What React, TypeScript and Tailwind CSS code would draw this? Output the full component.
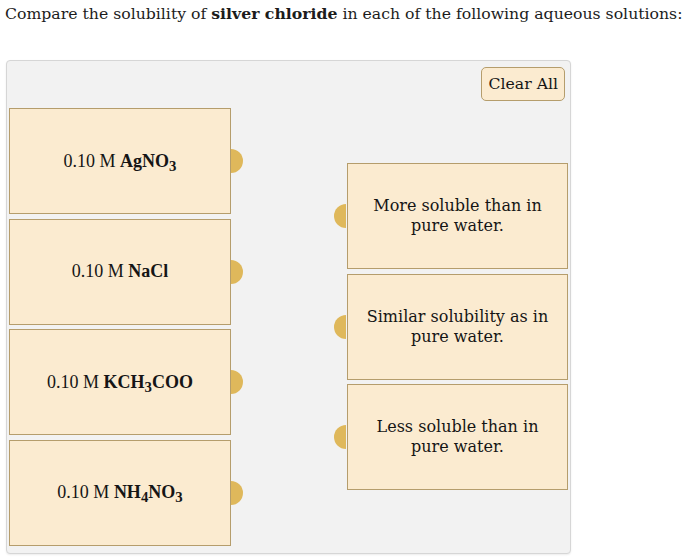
import React from "react";

const serif = { fontFamily: '"DejaVu Serif", "Liberation Serif", serif' };

function Knob({ side }: { side: "left" | "right" }) {
  return side === "right" ? (
    <span className="absolute right-[-13px] top-1/2 -translate-y-1/2 w-[12px] h-[24px] rounded-r-full bg-[#dfb85b]" />
  ) : (
    <span className="absolute left-[-14px] top-1/2 -translate-y-1/2 w-[12px] h-[24px] rounded-l-full bg-[#dfb85b]" />
  );
}

function Sub({ children }: { children: React.ReactNode }) {
  return <sub className="text-[0.82em] bottom-[-0.3em]">{children}</sub>;
}

function LeftItem({ children }: { children: React.ReactNode }) {
  return (
    <div className="relative h-[106px] flex items-center justify-center border border-[#b59d6c] bg-[#fbebd0] text-[18px] text-[#151515] font-['Liberation_Serif',serif]">
      <span>{children}</span>
      <Knob side="right" />
    </div>
  );
}

function RightItem({ text }: { text: string }) {
  return (
    <div
      className="relative h-[106px] flex items-center justify-center border border-[#b59d6c] bg-[#fbebd0] px-3 text-center text-[16px] leading-[20px] text-[#151515]"
      style={serif}
    >
      <span className="max-w-[190px]">{text}</span>
      <Knob side="left" />
    </div>
  );
}

export default function App() {
  return (
    <div className="w-[688px] h-[558px] bg-white">
      <p className="pl-[5px] pt-[2px] text-[15.7px] leading-[24px] text-[#1c1c1c]" style={serif}>
        Compare the solubility of <b>silver chloride</b> in each of the following aqueous solutions:
      </p>
      <div className="ml-[6px] mt-[34px] w-[565px] h-[494px] rounded-[4px] border border-[#d6d6d6] bg-[#f2f2f2] px-[2px] pt-[6px] shadow-[0_1px_2px_rgba(0,0,0,0.08)]">
        <div className="flex justify-end pr-[3px]">
          <button
            className="h-[34px] px-[6px] rounded-[5px] border border-[#b59d6c] bg-[#fbebd0] text-[15.7px] text-[#151515]"
            style={serif}
          >
            Clear All
          </button>
        </div>
        <div className="flex gap-[116px] mt-[7px]">
          <div className="w-[222px] flex flex-col gap-[4.5px]">
            <LeftItem>
              0.10 M <b>AgNO<Sub>3</Sub></b>
            </LeftItem>
            <LeftItem>
              0.10 M <b>NaCl</b>
            </LeftItem>
            <LeftItem>
              0.10 M <b>KCH<Sub>3</Sub>COO</b>
            </LeftItem>
            <LeftItem>
              0.10 M <b>NH<Sub>4</Sub>NO<Sub>3</Sub></b>
            </LeftItem>
          </div>
          <div className="w-[221px] flex flex-col gap-[4.5px] pt-[55px]">
            <RightItem text="More soluble than in pure water." />
            <RightItem text="Similar solubility as in pure water." />
            <RightItem text="Less soluble than in pure water." />
          </div>
        </div>
      </div>
    </div>
  );
}
